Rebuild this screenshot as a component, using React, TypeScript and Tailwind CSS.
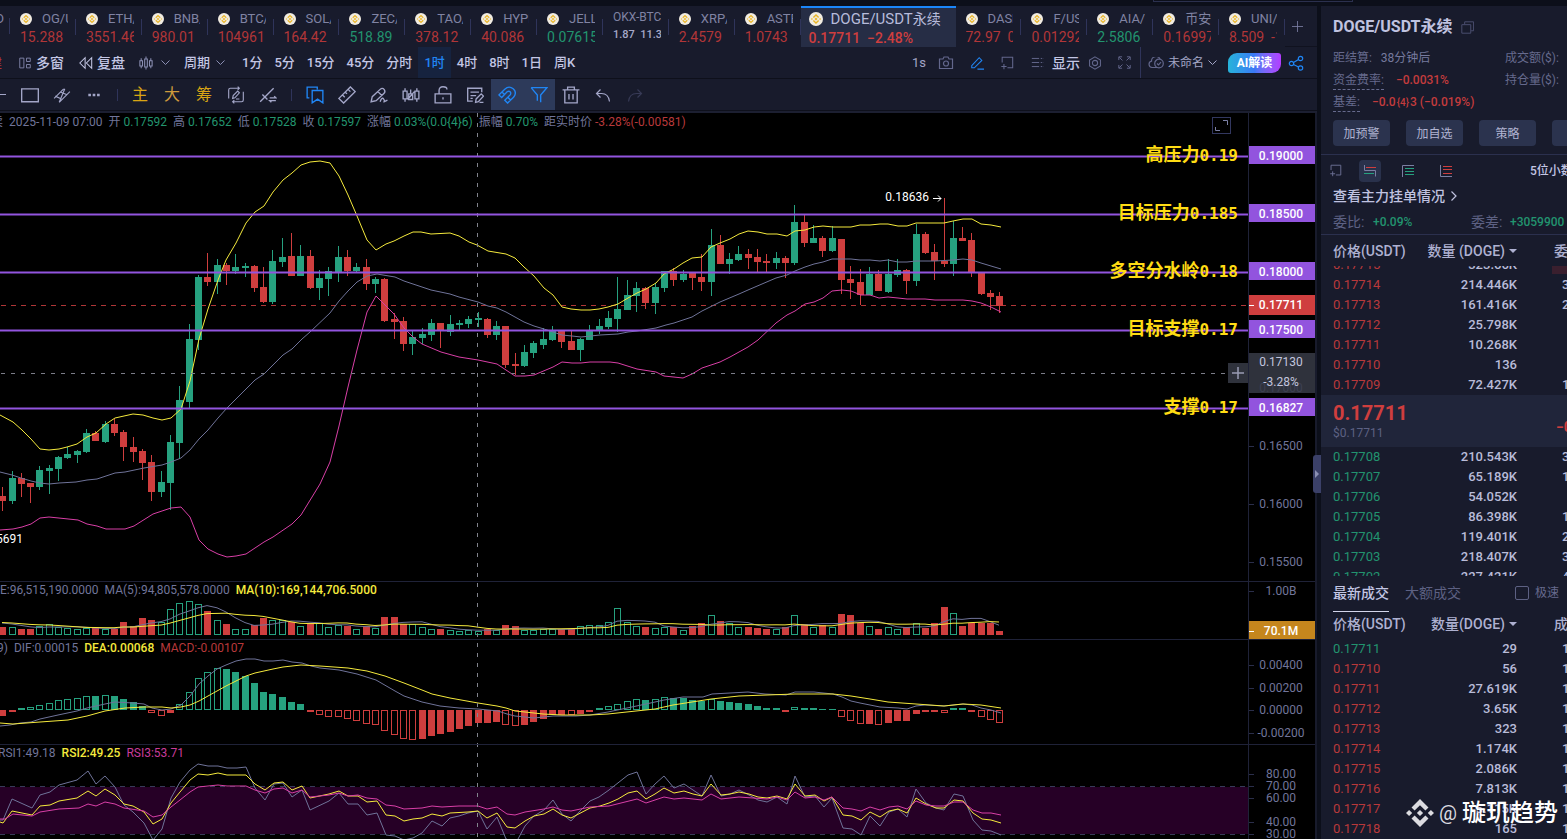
import { FC, ReactNode } from "react";
import clsx from "clsx";

const UP = "#26a17f";
const DOWN = "#cf3e3e";
const YELLOW = "#f5ea3d";
const SLATE = "#6f7399";
const PINK = "#d83fa6";
const PURPLE = "#9254de";

/* ---------- Data ---------- */

interface Tab {
  name: string;
  price: string;
  up?: boolean;
  plain?: boolean;
}

const leftTabs: Tab[] = [
  { name: "OG/USDT", price: "15.288" },
  { name: "ETH/USDT", price: "3551.46" },
  { name: "BNB/USDT", price: "980.01" },
  { name: "BTC/USDT", price: "104961" },
  { name: "SOL/USDT", price: "164.42" },
  { name: "ZEC/USDT", price: "518.89", up: true },
  { name: "TAO/USDT", price: "378.12" },
  { name: "HYPE/USDT", price: "40.086" },
  { name: "JELLY/USDT", price: "0.07615", up: true },
  { name: "OKX-BTC", price: "1.87  11.36", plain: true },
  { name: "XRP/USDT", price: "2.4579" },
  { name: "ASTER/USDT", price: "1.0743" },
];

const rightTabs: Tab[] = [
  { name: "DASH/USDT", price: "72.97  0.12" },
  { name: "F/USDT", price: "0.01292" },
  { name: "AIA/USDT", price: "2.5806", up: true },
  { name: "币安人生", price: "0.16997" },
  { name: "UNI/USDT", price: "8.509  -1.2" },
];

const periods = ["1分", "5分", "15分", "45分", "分时", "1时", "4时", "8时", "1日", "周K"];

// [up, body top, body bottom, high, low]
const candles: [number, number, number, number, number][] = [
  [0, 496, 501, 487, 511], [1, 478, 501, 471, 504], [0, 478, 484, 473, 497], [0, 483, 487, 483, 503],
  [1, 470, 487, 466, 490], [1, 468, 471, 465, 494], [1, 457, 469, 456, 481], [1, 454, 458, 447, 459],
  [1, 451, 455, 450, 463], [1, 433, 452, 429, 453], [0, 433, 441, 431, 441], [1, 424, 442, 421, 443],
  [0, 424, 433, 419, 436], [0, 432, 447, 430, 461], [0, 447, 452, 437, 462], [0, 451, 463, 449, 480],
  [0, 462, 492, 455, 501], [1, 482, 492, 471, 497], [1, 442, 483, 435, 510], [1, 400, 443, 386, 459],
  [1, 339, 402, 324, 408], [1, 277, 340, 275, 350], [0, 277, 282, 253, 286], [1, 265, 282, 259, 294],
  [0, 265, 271, 263, 285], [1, 267, 271, 254, 274], [1, 266, 268, 263, 277], [0, 266, 288, 265, 292],
  [0, 287, 302, 267, 303], [1, 261, 302, 250, 304], [1, 257, 262, 238, 267], [0, 256, 276, 233, 276],
  [1, 256, 276, 245, 276], [0, 256, 288, 250, 289], [1, 278, 288, 270, 300], [1, 271, 279, 267, 296],
  [1, 257, 272, 246, 282], [0, 257, 271, 250, 276], [1, 267, 271, 263, 273], [0, 267, 284, 259, 290],
  [1, 279, 284, 277, 293], [0, 279, 321, 278, 322], [0, 319, 322, 313, 339], [0, 321, 344, 317, 351],
  [1, 337, 344, 331, 355], [1, 334, 338, 328, 344], [1, 323, 335, 319, 341], [0, 323, 331, 323, 348],
  [1, 324, 332, 315, 336], [1, 323, 325, 320, 330], [1, 319, 324, 316, 328], [1, 318, 320, 312, 327],
  [0, 319, 335, 318, 338], [1, 326, 335, 321, 340], [0, 326, 365, 326, 368], [0, 364, 366, 353, 375],
  [1, 352, 366, 345, 367], [1, 343, 353, 341, 358], [1, 339, 345, 328, 349], [1, 330, 340, 326, 341],
  [0, 330, 342, 330, 348], [0, 341, 350, 331, 350], [1, 339, 350, 338, 361], [1, 330, 340, 325, 340],
  [1, 326, 331, 319, 334], [1, 318, 327, 311, 329], [1, 309, 319, 277, 332], [1, 295, 310, 280, 310],
  [1, 288, 296, 282, 312], [0, 288, 303, 287, 309], [1, 287, 303, 283, 314], [1, 271, 288, 271, 292],
  [0, 271, 280, 268, 286], [1, 274, 280, 270, 282], [0, 273, 278, 273, 290], [0, 277, 282, 254, 291],
  [1, 245, 282, 229, 296], [0, 245, 264, 235, 264], [1, 259, 264, 253, 274], [1, 254, 260, 246, 261],
  [0, 254, 258, 249, 269], [0, 257, 262, 249, 272], [0, 261, 263, 254, 272], [1, 258, 263, 252, 269],
  [0, 258, 263, 256, 278], [1, 222, 263, 205, 265], [0, 222, 243, 215, 247], [1, 238, 243, 225, 243],
  [0, 238, 251, 236, 257], [1, 238, 251, 226, 252], [0, 239, 280, 239, 294], [0, 279, 283, 266, 299],
  [0, 282, 295, 269, 305], [1, 274, 295, 267, 295], [0, 274, 291, 270, 291], [1, 274, 292, 259, 293],
  [1, 270, 275, 259, 277], [0, 270, 281, 269, 294], [1, 234, 281, 224, 286], [0, 234, 253, 232, 254],
  [0, 252, 261, 244, 280], [0, 261, 264, 198, 267], [1, 238, 264, 221, 276], [0, 238, 241, 227, 241],
  [0, 240, 272, 233, 277], [0, 273, 294, 273, 295], [0, 293, 297, 290, 310], [0, 296, 306, 292, 313],
];

const volumes = [
  8, 8, 6, 6, 9, 11, 8, 7, 6, 7, 7, 6, 6, 13, 9, 17, 15, 13, 26, 32, 34, 31, 24, 15, 11, 6, 6, 10,
  17, 15, 15, 13, 9, 12, 12, 8, 10, 9, 6, 9, 7, 18, 18, 11, 11, 8, 6, 6, 5, 4, 5, 4, 6, 5, 10, 9,
  5, 5, 6, 6, 6, 6, 9, 10, 10, 13, 27, 13, 9, 8, 7, 8, 8, 5, 9, 12, 20, 14, 12, 8, 8, 7, 6, 6,
  8, 20, 11, 8, 10, 8, 21, 20, 12, 9, 6, 8, 6, 8, 12, 7, 12, 28, 22, 9, 12, 12, 12, 4,
];

const macd = [
  -6, -2, 2, 3, 5, 7, 10, 11, 12, 14, 14, 15, 14, 11, 8, 4, -3, -6, -3, 6, 18, 32, 38, 42, 41, 38,
  34, 27, 18, 16, 13, 8, 6, -2, -5, -7, -7, -9, -11, -14, -15, -21, -25, -29, -30, -29, -26, -24,
  -22, -19, -16, -13, -13, -12, -15, -16, -15, -12, -9, -5, -5, -5, -4, -2, 2, 4, 6, 9, 11, 10, 11,
  13, 12, 12, 10, 9, 11, 9, 8, 7, 6, 4, 2, 2, -2, 3, 2, 2, 1, 1, -7, -11, -14, -14, -15, -13, -11,
  -11, -4, -2, -2, -3, 2, 2, -2, -7, -10, -13,
];

// Bars drawn as outlines
const hollow = new Set([
  3, 4, 5, 6, 7, 8, 9, 11, 16, 17, 19, 20, 21, 22, 23, 34, 35, 36, 37, 38, 39, 40, 41, 42, 43, 44,
  54, 55, 61, 65, 66, 67, 68, 70, 71, 76, 85, 90, 91, 92, 94, 101, 105, 106, 107,
]);

const bollUpper =
  "0,415 13,422 22,430 31,439 40,449 49,450 59,449 67,447 77,444 87,437 96,433 106,424 115,418 133,414 143,415 153,418 162,420 171,418 181,409 190,381 199,339 208,309 218,280 226,260 236,243 246,223 255,212 264,206 273,192 283,180 292,173 301,165 310,162 320,161 330,163 339,176 348,195 357,216 367,240 376,250 386,244 394,241 404,236 413,232 421,232 431,234 450,233 459,236 469,242 477,245 488,251 506,254 515,258 524,267 534,276 544,288 553,295 562,307 571,309 581,310 590,310 599,309 608,307 618,304 628,298 637,293 646,289 656,283 664,274 674,269 683,263 692,258 702,257 711,247 720,243 730,239 739,234 748,231 758,232 767,234 777,234 787,236 795,231 805,230 814,227 823,226 833,227 851,227 860,225 870,225 880,224 888,224 898,226 907,226 916,223 944,223 953,221 963,219 972,219 981,224 991,225 1001,227";
const bollMid =
  "0,472 12,475 21,478 31,481 40,483 49,484 59,483 76,482 87,480 97,479 106,476 115,473 125,472 144,468 162,465 171,462 181,458 190,450 199,439 208,430 218,418 227,408 255,380 264,374 283,355 292,349 302,339 310,332 330,313 339,301 348,291 357,282 367,276 377,274 395,277 404,281 431,290 450,294 459,297 478,302 488,306 497,308 506,312 524,322 534,326 544,329 562,335 572,336 581,337 600,335 618,334 628,332 637,331 656,328 666,325 674,323 692,317 702,311 720,302 739,294 748,290 776,278 787,275 795,271 805,267 814,264 823,262 832,259 851,259 860,260 870,260 880,261 888,260 898,262 907,262 916,261 935,261 953,260 963,259 972,260 981,263 991,266 1001,269";
const bollLower =
  "0,530 13,529 22,527 31,524 40,518 49,517 78,520 87,524 97,526 106,529 125,529 134,526 153,514 171,508 181,507 190,517 199,540 208,549 218,554 227,557 236,556 246,554 264,542 273,537 292,524 301,515 320,484 330,462 339,426 348,387 357,350 367,312 376,296 385,305 394,314 404,328 413,337 422,344 441,352 459,357 478,360 497,364 515,376 525,376 534,375 553,367 562,362 572,363 581,363 590,362 610,362 618,363 637,369 656,372 664,376 683,378 692,374 702,368 720,362 730,357 739,352 748,347 758,340 776,323 787,315 795,311 805,304 814,302 823,298 832,291 842,290 851,291 861,295 870,295 879,298 888,297 898,298 907,299 925,299 935,300 963,300 972,301 981,303 991,307 1001,312";
const difLine =
  "0,726 10,725 20,723 31,722 40,719 58,715 77,711 87,708 105,704 115,702 133,703 144,704 152,708 162,710 171,709 181,705 190,696 199,684 208,676 217,669 226,665 236,661 246,659 255,659 264,661 273,661 283,660 292,662 302,663 311,666 320,668 339,670 357,674 376,680 395,691 404,696 422,702 440,706 459,708 478,709 498,711 507,714 515,716 525,717 534,718 553,716 576,716 590,715 608,712 627,708 646,704 664,700 683,697 703,697 712,694 730,693 748,692 765,694 786,695 795,692 814,692 833,694 842,697 851,701 860,703 880,707 898,708 907,709 916,706 925,705 944,706 953,705 963,704 972,705 981,708 991,710 1001,713";
const deaLine =
  "0,723 13,724 40,722 68,720 87,716 105,711 125,708 144,707 162,707 171,708 181,707 190,705 199,701 217,691 226,686 246,676 255,673 273,669 283,667 301,665 320,666 348,668 367,671 385,676 404,683 422,690 432,694 450,698 478,703 497,706 506,708 515,711 525,712 543,714 562,715 590,715 608,714 636,711 655,709 673,705 692,702 711,699 739,696 767,695 795,694 833,694 851,696 870,699 888,702 916,704 944,706 963,704 981,705 1001,708";
const rsi1 =
  "0,820 3,820 12,799 32,808 40,795 50,792 59,785 77,780 88,771 96,784 105,776 115,787 124,805 133,812 144,823 153,840 162,829 171,798 180,782 190,770 198,764 208,766 218,766 227,768 237,768 246,767 255,788 265,800 274,784 283,783 292,797 302,790 310,810 329,801 339,793 348,804 358,804 367,815 377,813 386,835 395,836 404,840 413,838 422,833 432,821 442,826 450,818 459,816 468,813 478,811 487,829 497,817 506,839 515,842 518,839 525,826 534,816 544,810 553,800 562,814 571,821 580,811 590,801 599,797 609,790 628,775 637,772 646,794 655,784 664,776 674,788 684,784 693,790 702,796 711,775 721,796 730,794 739,790 749,795 758,800 767,802 777,797 787,804 795,776 805,797 815,796 824,807 832,798 843,828 852,829 861,835 870,816 880,826 889,812 898,809 907,817 916,789 926,803 936,808 944,810 954,794 963,796 973,820 982,830 991,831 1001,835";
const rsi2 =
  "0,822 3,823 12,811 32,815 40,806 50,805 59,801 77,798 88,791 96,796 105,789 115,795 124,804 133,806 144,812 153,824 162,819 171,803 180,792 190,780 198,774 208,775 218,773 227,775 246,775 255,784 265,790 274,783 283,782 292,790 302,786 310,798 329,794 339,791 348,796 358,796 367,802 377,801 386,815 395,816 404,821 413,819 422,818 432,814 442,816 450,813 468,812 478,811 487,818 497,813 507,827 515,828 525,821 534,816 544,814 553,809 562,815 571,818 590,808 600,806 609,803 618,799 628,793 637,791 646,799 655,794 664,788 674,793 684,791 693,794 702,796 711,784 721,795 730,794 739,792 749,794 758,797 767,798 777,796 787,799 795,784 805,796 815,795 824,801 832,797 843,815 852,816 861,820 870,812 880,817 889,811 898,809 907,813 916,798 926,804 936,808 944,808 954,800 963,801 973,813 982,819 991,820 1001,823";
const rsi3 =
  "0,819 5,819 13,814 32,816 40,812 59,809 79,808 88,804 96,806 105,802 115,804 124,808 144,811 153,817 162,815 171,807 180,800 190,792 198,787 218,785 227,786 246,786 255,790 265,793 274,789 283,788 292,793 302,790 310,797 329,795 339,793 348,796 358,795 367,798 377,799 386,805 395,806 404,809 422,808 432,806 442,807 459,806 478,806 487,809 497,807 507,814 515,815 525,812 544,809 553,807 562,810 571,811 590,807 609,806 637,799 646,803 655,800 664,797 674,799 684,798 702,800 711,794 721,799 739,797 767,799 777,797 787,800 795,792 805,798 815,797 824,800 832,797 843,808 852,809 861,811 870,807 880,810 889,807 898,806 907,809 916,801 926,805 936,806 944,806 954,802 963,802 973,810 982,813 991,813 1001,815";

const levels = [
  { y: 156, name: "高压力", value: "0.19", tag: "0.19000" },
  { y: 214, name: "目标压力", value: "0.185", tag: "0.18500" },
  { y: 272, name: "多空分水岭", value: "0.18", tag: "0.18000" },
  { y: 330, name: "目标支撑", value: "0.17", tag: "0.17500" },
  { y: 408, name: "支撑", value: "0.17", tag: "0.16827" },
];

type Row = [string, string, string];

const asks: Row[] = [
  ["0.17715", "323.66K", "5"],
  ["0.17714", "214.446K", "38"],
  ["0.17713", "161.416K", "28"],
  ["0.17712", "25.798K", ""],
  ["0.17711", "10.268K", ""],
  ["0.17710", "136", ""],
  ["0.17709", "72.427K", "12"],
];

const bids: Row[] = [
  ["0.17708", "210.543K", "37"],
  ["0.17707", "65.189K", "11"],
  ["0.17706", "54.052K", ""],
  ["0.17705", "86.398K", "15"],
  ["0.17704", "119.401K", "21"],
  ["0.17703", "218.407K", "38"],
  ["0.17702", "227.421K", "40"],
];

const trades: Row[] = [
  ["0.17711", "29", "10"],
  ["0.17710", "56", "10"],
  ["0.17711", "27.619K", "10"],
  ["0.17712", "3.65K", "10"],
  ["0.17713", "323", "10"],
  ["0.17714", "1.174K", "10"],
  ["0.17715", "2.086K", "10"],
  ["0.17716", "7.813K", "10"],
  ["0.17717", "5.115K", "10"],
  ["0.17718", "165", "10"],
];

/* ---------- Icons ---------- */

interface IconProps {
  size?: number;
  className?: string;
  children: ReactNode;
}

const Icon: FC<IconProps> = ({ size = 16, className, children }) => (
  <svg
    width={size}
    height={size}
    viewBox="0 0 16 16"
    fill="none"
    stroke="currentColor"
    strokeWidth="1.2"
    className={clsx("shrink-0", className)}
    aria-hidden
  >
    {children}
  </svg>
);

const CoinIcon: FC<{ className: string }> = ({ className }) => (
  <svg viewBox="0 0 24 24" className={clsx("shrink-0", className)} aria-hidden>
    <circle cx="12" cy="12" r="12" fill="#f1ece2" />
    <g fill="none" stroke="#e9b527" strokeWidth="2.4">
      <path d="M7.5 9.5 12 5l4.500 4.500" />
      <path d="M7.500 14.500 12 19l4.500-4.500" />
    </g>
    <path d="m12 9.500 2.500 2.500-2.500 2.500L9.500 12zM5 10.300 6.700 12 5 13.700 3.300 12zM19 10.300l1.700 1.700-1.700 1.700-1.700-1.700z" fill="#e9b527" />
  </svg>
);

const Chevron: FC = () => (
  <svg width="9" height="6" viewBox="0 0 9 6" fill="none" stroke="currentColor" className="shrink-0" aria-hidden>
    <path d="M.5.500 4.500 4.500 8.500.500" />
  </svg>
);

const Caret: FC = () => (
  <svg width="8" height="4" viewBox="0 0 8 4" fill="currentColor" className="shrink-0" aria-hidden>
    <path d="M0 0h8L4 4z" />
  </svg>
);

const CandlesIcon: FC<{ size?: number }> = ({ size }) => (
  <Icon size={size}>
    <path d="M1 5.500h3v6H1zM6.500 3.500h3v9h-3zM12 5.500h3v6h-3zM2.500 2.500v3M2.500 11.500v2.500M8 .500v3M8 12.500v3M13.500 2.500v3M13.500 11.500v2.500" />
  </Icon>
);

const AddPaneIcon: FC<{ size?: number }> = ({ size }) => (
  <Icon size={size}>
    <path d="M2.500 7.500V1.500h12v12H8.500M4.500 9v6M1.500 12h6" />
  </Icon>
);

/* ---------- Top tabs ---------- */

const TabItem: FC<{ tab: Tab }> = ({ tab }) => (
  <button className="flex min-w-0 flex-1 basis-0 items-center text-left">
    <span
      className={clsx(
        "ml-[10px] flex h-full min-w-0 flex-1 flex-col overflow-hidden whitespace-pre",
        tab.plain ? "pt-[2px]" : "pt-1"
      )}
    >
      <span className="flex items-center gap-[10px]">
        {!tab.plain && <CoinIcon className="h-3 w-3" />}
        <span
          className={clsx(
            "leading-[18px] text-[#8083a3]",
            tab.plain ? "text-xs" : "text-[13px]"
          )}
        >
          {tab.name}
        </span>
      </span>
      <span
        className={clsx(
          "leading-[18px]",
          tab.plain ? "text-[11px] font-medium text-[#a6a9c9]" : "text-sm leading-[18px]",
          !tab.plain && (tab.up ? "text-[#22946f]" : "text-[#b13638]")
        )}
      >
        {tab.price}
      </span>
    </span>
    <span className="ml-[7px] h-4 w-px bg-[#2f345a]" />
  </button>
);

const TabBar: FC = () => (
  <nav className="flex h-[41px] bg-[#181b2c]">
    <div className="flex w-[10px] shrink-0 items-start justify-end overflow-hidden">
      <span className="mr-[5px] pt-1 text-[13px] leading-[18px] text-[#8083a3]">D</span>
      <span className="mt-3 h-4 w-px shrink-0 bg-[#2f345a]" />
    </div>
    {leftTabs.map((tab) => (
      <TabItem key={tab.name} tab={tab} />
    ))}
    <button className="w-[155px] shrink-0 border-t-2 border-[#1b86f9] bg-[#262d45] pl-2 text-left">
      <span className="flex items-center gap-2 pt-[2px] text-[15px] leading-[18px] whitespace-nowrap text-[#b7bbdb]">
        <CoinIcon className="h-[14px] w-[14px]" />
        <span>
          DOGE/USDT<span className="text-sm leading-[18px]">永续</span>
        </span>
      </span>
      <span className="block text-sm leading-5 font-medium text-[#cf3e3e]">0.17711&nbsp; −2.48%</span>
    </button>
    {rightTabs.map((tab) => (
      <TabItem key={tab.name} tab={tab} />
    ))}
    <button aria-label="添加" className="flex w-8 shrink-0 items-center justify-center border-b border-[#10121f] pr-[6px] text-[#7c80a5]">
      <Icon size={11}>
        <path d="M8 0v16M0 8h16" />
      </Icon>
    </button>
  </nav>
);

/* ---------- Period toolbar ---------- */

const PeriodBar: FC = () => (
  <div className="flex h-8 items-center justify-between border-b border-[#0e101b] bg-[#181b2c] text-sm leading-5 whitespace-nowrap text-[#c3c6e4]">
    <div className="flex h-full items-center">
      <button className="flex w-[19px] items-center overflow-hidden text-[#b13638]">
        <span className="-ml-[11px] text-[13px]">建</span>
      </button>
      <button className="flex items-center gap-[5px] font-medium">
        <Icon size={12} className="text-[#8589ae]">
          <path d="M1 1.500h5.500v13H1zM10 1.500h5v4.500h-5zM10 10h5v4.500h-5z" />
        </Icon>
        多窗
      </button>
      <button className="ml-[15px] flex items-center gap-1 font-medium">
        <Icon size={14}>
          <path d="M7 2v12L1 8zM14.500 2v12L8.500 8z" />
        </Icon>
        复盘
      </button>
      <button aria-label="K线样式" className="ml-[14px] flex items-center gap-2 text-[#8b8fb3]">
        <CandlesIcon size={14} />
        <Chevron />
      </button>
      <button className="ml-[14px] flex items-center gap-[6px] text-[13px] font-medium">
        周期
        <span className="text-[#8b8fb3]">
          <Chevron />
        </span>
      </button>
      <div className="ml-[11px] flex h-full">
        {periods.map((p) => (
          <button
            key={p}
            className={clsx(
              "px-[6px] text-[13px] font-medium",
              p === "1时" && "bg-[#16233f] text-[#2086f5]"
            )}
          >
            {p}
          </button>
        ))}
      </div>
    </div>

    <div className="flex h-full items-center pr-[13px] text-[#63678c]">
      <button className="text-[13px] text-[#a3a6c6]">1s</button>
      <button aria-label="截图" className="ml-3">
        <Icon>
          <path d="M1.500 4h3.500l1-2h4l1 2h3.500v9.500h-13z" />
          <circle cx="8" cy="8.500" r="2.500" />
        </Icon>
      </button>
      <button aria-label="画图" className="ml-4 text-[#2086f5]">
        <Icon size={14}>
          <path d="M2 11 10.500 2 13.500 5 5 13.500H2zM8.500 15H16" />
        </Icon>
      </button>
      <button aria-label="添加窗口" className="ml-4">
        <AddPaneIcon size={14} />
      </button>
      <button aria-label="列表" className="ml-[17px]">
        <Icon size={13}>
          <path d="M1 3h9M1 8h9M1 13h9" />
          <path d="M12 3h3M12 8h3M12 13h3" strokeDasharray="1.500 1" />
        </Icon>
      </button>
      <button className="ml-2 font-medium text-[#c3c6e4]">显示</button>
      <button aria-label="设置" className="ml-2">
        <Icon size={14}>
          <path d="M8 1l6.200 3.500v7L8 15l-6.200-3.500v-7z" />
          <circle cx="8" cy="8" r="3" />
        </Icon>
      </button>
      <button aria-label="全屏" className="ml-4">
        <Icon size={13}>
          <path d="M1 5V1h4M11 1h4v4M15 11v4h-4M5 15H1v-4M1.500 1.500l4 4M14.500 1.500l-4 4M14.500 14.500l-4-4M1.500 14.500l4-4" />
        </Icon>
      </button>
      <span className="ml-[9px] h-full w-px bg-[#2f345a]" />
      <button className="ml-[7px] flex items-center gap-1 text-xs text-[#a3a6c6]">
        <svg width="16" height="12" viewBox="0 0 16 12" fill="none" stroke="#63678c" strokeWidth="1.200" aria-hidden>
          <path d="M9 10.500H4a3.200 3.200 0 0 1-.5-6.300A4.500 4.500 0 0 1 12 2" />
          <circle cx="11" cy="6.500" r="4.300" />
          <path d="m9 6.500 1.500 1.500 2.500-2.800" />
        </svg>
        <span>未命名</span>
        <Chevron />
      </button>
      <button className="ml-[11px] h-5 w-[53px] rounded-[3px] rounded-tl-[9px] rounded-br-[9px] bg-linear-to-r from-[#27b3d9] via-[#3b78f5] to-[#b43bff] text-xs font-bold text-white">
        AI解读
      </button>
      <button aria-label="分享" className="ml-[7px] text-[#2086f5]">
        <Icon>
          <circle cx="3.500" cy="8.500" r="2.200" />
          <circle cx="12.500" cy="3.500" r="2.200" />
          <circle cx="12.500" cy="13" r="2.200" />
          <path d="m5.500 7.500 5-3M5.500 9.500l5 2.500" />
        </Icon>
      </button>
    </div>
  </div>
);

/* ---------- Drawing toolbar ---------- */

interface ToolProps {
  label: string;
  tone?: string;
  children: ReactNode;
}

const Tool: FC<ToolProps> = ({ label, tone = "text-[#a3a6c8]", children }) => (
  <button aria-label={label} className={clsx("flex w-8 shrink-0 items-center justify-center", tone)}>
    {children}
  </button>
);

const ToolDivider: FC = () => (
  <span className="flex w-[14px] shrink-0 items-center justify-center">
    <span className="h-3 w-px bg-[#2f345a]" />
  </span>
);

const DrawBar: FC = () => (
  <div className="flex h-8 border-b border-[#0e101b] bg-[#181b2c]">
    <button aria-label="水平线" className="flex w-[14px] shrink-0 items-center">
      <span className="h-px w-[6px] bg-[#a3a6c8]" />
    </button>
    <Tool label="矩形">
      <Icon size={18}>
        <path d="M.600 2.500h14.800v11.500H.600z" />
      </Icon>
    </Tool>
    <Tool label="平行线">
      <Icon size={18}>
        <path d="M1 11 9.500 2.500M5.500 14.500 15 5M2 9l5.500 2.500M7 5.500l5 2M10.500 2.500l-5 12" strokeWidth="1" />
      </Icon>
    </Tool>
    <Tool label="更多">
      <Icon size={14}>
        <path d="M1.500 8h3M6.500 8h3M11.500 8h3" strokeWidth="3" />
      </Icon>
    </Tool>
    <ToolDivider />
    <Tool label="主图指标" tone="text-base text-[#d9a514]">主</Tool>
    <Tool label="大单" tone="text-base text-[#cf9a3c]">大</Tool>
    <Tool label="筹码" tone="text-base text-[#d9a514]">筹</Tool>
    <Tool label="编辑指标">
      <Icon size={18}>
        <path d="M1.500 11V3.500q0-1.500 1.500-1.500h8M9.500.500l1.500 1.500-1.500 1.500M14.500 5v7.500q0 1.500-1.500 1.500H5M6.500 12.500 5 14l1.500 1.500M5 11l.5-2.500L9.500 4.500 11 6l-4 4.500zM8 11.500h3" strokeWidth="1" />
      </Icon>
    </Tool>
    <Tool label="画线管理">
      <Icon size={18}>
        <path d="M1 14 13 2M3 7.500 7.500 12M9.500 10.500h5.500l-1.500-1.500M15 13H9.500l1.500 1.500" />
      </Icon>
    </Tool>
    <ToolDivider />
    <span className="w-px shrink-0" />
    <Tool label="收藏" tone="text-[#2086f5]">
      <Icon size={18}>
        <path d="M5.500 4h9.500v11l-4.700-3.300L5.500 15zM3 10.500H1V1h9v2" />
      </Icon>
    </Tool>
    <Tool label="测量">
      <Icon size={18}>
        <path d="M.8 11 11 .8l4.200 4.200L5 15.200zM4 8l2 2M6.500 5.500l1.500 1.500M9 3l2 2" />
      </Icon>
    </Tool>
    <Tool label="画笔">
      <Icon size={18}>
        <path d="M1 14l1-4.500L9 3q2-1.800 3.500 0t0 3.500L5.500 13zM7 5l3.500 3.500M9 14q1.500-4.500 3-2.500t.5 2.500T15.500 12.500" />
      </Icon>
    </Tool>
    <Tool label="K线复制">
      <Icon size={18}>
        <path d="M1 4.500h3.500v7H1zM11.500 4.500H15v7h-3.500zM6 7h3.500v5H6zM2.700 2v2.500M2.700 11.500V14M7.700 3v4M13.200 2v2.500M13.200 11.500V14M5 12l6-7" />
      </Icon>
    </Tool>
    <Tool label="锁定">
      <Icon size={18}>
        <path d="M1 7h14v8H1zM4.500 7V4q0-3.300 3.500-3.300T11.500 3M8 10v2" />
      </Icon>
    </Tool>
    <Tool label="备注">
      <Icon size={18}>
        <path d="M14 5.500V2H1.500v11.500H6M4 5.500h7.500M4 8.500h5M4 11h2M8.500 14.500l.5-3L13.500 7l2 2-4.500 5zM12 14.500h3.500" />
      </Icon>
    </Tool>
    <Tool label="磁吸" tone="bg-[#2d3a5a] text-[#2086f5]">
      <Icon size={18}>
        <path d="M.8 8 6 2.800q3.800-3.500 7.500-.3t.3 7.500L8.500 15.200 6 12.700l5-5q.8-1.500-.2-2.500t-2.500-.2l-5 5.200zM3.500 5.300 6 7.800M11.200 12.500 8.700 10" />
      </Icon>
    </Tool>
    <Tool label="筛选" tone="bg-[#2d3a5a] text-[#2086f5]">
      <Icon size={18}>
        <path d="M1 1.500h14L9.500 8v6.500M1 1.500 6.500 8v5" />
      </Icon>
    </Tool>
    <Tool label="删除">
      <Icon size={18}>
        <path d="M.5 3.500h15M5 3.500V1h6v2.500M2.500 3.500V15h11V3.500M6.200 7v5M9.800 7v5" />
      </Icon>
    </Tool>
    <Tool label="撤销">
      <Icon size={16}>
        <path d="M5.500 2.500 1.500 6.500l4 4M1.500 6.500h5q7 0 8 8" />
      </Icon>
    </Tool>
    <Tool label="重做" tone="text-[#373a56]">
      <Icon size={16}>
        <path d="m10.500 2.500 4 4-4 4M14.500 6.500h-5q-7 0-8 8" />
      </Icon>
    </Tool>
  </div>
);

/* ---------- Chart ---------- */

const barX = (i: number) => Math.floor(2.7 + 9.32 * i);

// Rolling mean of the volume bars as svg points, padded on the left
const volumeAverage = (n: number) => {
  const padded = [...Array(10).fill(13), ...volumes];
  return volumes
    .map((_, i) => {
      const part = padded.slice(i + 11 - n, i + 11);
      const mean = part.reduce((a, b) => a + b, 0) / n;
      return `${barX(i)},${(635 - mean).toFixed(1)}`;
    })
    .join(" ");
};

const Line: FC<{ points: string; color: string }> = ({ points, color }) => (
  <polyline points={points} fill="none" stroke={color} strokeWidth="1" />
);

const Crosshair: FC = () => (
  <line x1="477.5" x2="477.5" y1="113" y2="840" stroke="#82848d" strokeDasharray="4 6" />
);

const Tick: FC<{ y: number; children: string }> = ({ y, children }) => (
  <>
    <line x1="0" x2="6" y1={y + 0.5} y2={y + 0.5} stroke="#2a2e4a" />
    <text x="33" y={y + 4} fill="#71759a" textAnchor="middle">
      {children}
    </text>
  </>
);

interface PaneProps {
  top: number;
  className: string;
  plot: ReactNode;
  axis: ReactNode;
  legend: ReactNode;
}

// One stacked pane: drawing on the left, value axis on the right
const Pane: FC<PaneProps> = ({ top, className, plot, axis, legend }) => (
  <section className={clsx("relative flex overflow-hidden bg-black text-xs", className)}>
    <svg className="h-full min-w-0 flex-1">
      <g transform={`translate(0 ${-top})`}>{plot}</g>
    </svg>
    <svg className="h-full w-[67px] shrink-0 border-l border-[#1f2238]">
      <g transform={`translate(-1 ${-top})`}>{axis}</g>
    </svg>
    <div className="absolute top-0 left-0 flex gap-[6px] leading-4 whitespace-nowrap text-[#71759a]">
      {legend}
    </div>
  </section>
);

const Quote: FC<{ label: string; value: string; down?: boolean }> = ({ label, value, down }) => (
  <span className="leading-[18px]">
    {label} <span className={down ? "text-[#b8393b]" : "text-[#23956f]"}>{value}</span>
  </span>
);

const PricePlot: FC = () => (
  <>
    <line x1="1" x2="100%" y1="305.5" y2="305.5" stroke="#b03637" strokeDasharray="5 5" />
    {candles.map(([up, top, bottom, high, low], i) => (
      <g key={i} fill={up ? UP : DOWN}>
        <rect x={barX(i)} y={high} width="1" height={low - high} />
        <rect x={barX(i) - 3} y={top} width="7" height={bottom - top} />
      </g>
    ))}
    <Line points={bollMid} color={SLATE} />
    <Line points={bollUpper} color={YELLOW} />
    <Line points={bollLower} color={PINK} />
    <Crosshair />
    <line x1="1" x2="100%" y1="373.5" y2="373.5" stroke="#7b7d88" strokeDasharray="4 6" />
    {levels.map((l) => (
      <line key={l.y} x1="0" x2="100%" y1={l.y + 0.5} y2={l.y + 0.5} stroke={PURPLE} strokeWidth="2" />
    ))}
    <text x="23" y="543" fill="#fff" textAnchor="end">
      0.15691
    </text>
    <text x="929" y="201" fill="#fff" textAnchor="end">
      0.18636
    </text>
    <path d="M933 198.500h8M938 195.500l3 3-3 3" fill="none" stroke="#fff" />
  </>
);

const Chart: FC = () => (
  <div className="flex min-h-0 flex-1 flex-col border-t-2 border-[#1c1f31] pr-[2px]">
    <div className="relative">
      <Pane
        top={113}
        className="h-[468px]"
        plot={<PricePlot />}
        axis={
          <>
            <Tick y={446}>0.16500</Tick>
            <Tick y={504}>0.16000</Tick>
            <Tick y={562}>0.15500</Tick>
            {levels.map((l) => (
              <g key={l.y}>
                <rect x="0" y={l.y - 10} width="68" height="18" fill={PURPLE} />
                <text x="33" y={l.y + 4} fill="#fff" fontWeight="500" textAnchor="middle">
                  {l.tag}
                </text>
              </g>
            ))}
            <rect x="0" y="295" width="68" height="20" fill={DOWN} />
            <line x1="0" x2="6" y1="305.5" y2="305.5" stroke="#fff" />
            <text x="33" y="309" fill="#fff" fontWeight="500" textAnchor="middle">
              0.17711
            </text>
            <rect x="1" y="353" width="67" height="40" fill="#2f323c" />
            <text x="33" y="392" fill="#3d4052" textAnchor="middle">
              0.17000
            </text>
            <text x="33" y="366" fill="#c3c5de" textAnchor="middle">
              0.17130
            </text>
            <text x="33" y="386" fill="#c3c5de" textAnchor="middle">
              -3.28%
            </text>
          </>
        }
        legend={
          <>
            <span className="-ml-[9px] leading-[18px]">卖</span>
            <span className="leading-[18px]">2025-11-09 07:00</span>
            <Quote label="开" value="0.17592" />
            <Quote label="高" value="0.17652" />
            <Quote label="低" value="0.17528" />
            <Quote label="收" value="0.17597" />
            <Quote label="涨幅" value="0.03%(0.0{4}6)" />
            <Quote label="振幅" value="0.70%" />
            <Quote label="距实时价" value="-3.28%(-0.00581)" down />
          </>
        }
      />
      {/* Level names, right against the axis */}
      <div className="pointer-events-none absolute inset-y-0 right-[77px] w-[140px] text-right text-lg leading-6 font-bold text-[#ffdc14]">
        {levels.map((l) => (
          <div key={l.y} className="absolute right-0 whitespace-nowrap" style={{ top: l.y - 113 - 13 }}>
            {l.name}
            <span className="font-['DejaVu_Sans_Mono',monospace] text-base leading-6">{l.value}</span>
          </div>
        ))}
      </div>
      <button aria-label="放大" className="absolute top-1 right-[84px] flex h-[17px] w-[19px] items-center justify-center border border-[#32375f] text-[#7c80a5]">
        <svg width="13" height="13" viewBox="0 0 13 13" fill="none" stroke="currentColor" aria-hidden>
          <path d="M8 1.500h4.500V6M.5 8v3.500H5" />
        </svg>
      </button>
      <button aria-label="添加预警线" className="absolute top-[250px] right-[67px] flex h-5 w-5 items-center justify-center bg-[#2f323c] text-[#9a9cb4]">
        <Icon size={12}>
          <path d="M8 0v16M0 8h16" strokeWidth="2" />
        </Icon>
      </button>
    </div>

    <Pane
      top={582}
      className="h-[58px] border-t border-[#1f2238]"
      plot={
        <>
          {volumes.map((v, i) =>
            candles[i][0] ? (
              <rect key={i} x={barX(i) - 2.5} y={635.5 - v} width="6" height={v - 1} fill="none" stroke={UP} />
            ) : (
              <rect key={i} x={barX(i) - 3} y={635 - v} width="7" height={v} fill={DOWN} />
            )
          )}
          <Line points={volumeAverage(5)} color={SLATE} />
          <Line points={volumeAverage(10)} color={YELLOW} />
          <Crosshair />
        </>
      }
      axis={
        <>
          <Tick y={591}>1.00B</Tick>
          <rect x="0" y="621" width="67" height="18" fill="#c5861d" />
          <line x1="0" x2="6" y1="631.5" y2="631.5" stroke="#fff" />
          <text x="33" y="635" fill="#fff" fontWeight="500" textAnchor="middle">
            70.1M
          </text>
        </>
      }
      legend={
        <>
          <span>E:96,515,190.0000</span>
          <span>MA(5):94,805,578.0000</span>
          <span className="font-medium text-[#f5ea3d]">MA(10):169,144,706.5000</span>
        </>
      }
    />

    <Pane
      top={640}
      className="h-[105px] border-t border-[#1f2238]"
      plot={
        <>
          {macd.map((v, i) => {
            const color = v > 0 ? UP : DOWN;
            const top = v > 0 ? 710 - v : 710;
            const height = Math.abs(v);
            return hollow.has(i) ? (
              <rect key={i} x={barX(i) - 2.5} y={top + 0.5} width="6" height={height - 1} fill="none" stroke={color} />
            ) : (
              <rect key={i} x={barX(i) - 3} y={top} width="7" height={height} fill={color} />
            );
          })}
          <Line points={difLine} color={SLATE} />
          <Line points={deaLine} color={YELLOW} />
          <Crosshair />
        </>
      }
      axis={
        <>
          <Tick y={665}>0.00400</Tick>
          <Tick y={688}>0.00200</Tick>
          <Tick y={710}>0.00000</Tick>
          <Tick y={733}>-0.00200</Tick>
        </>
      }
      legend={
        <>
          <span className="-ml-[3px]">9)</span>
          <span>DIF:0.00015</span>
          <span className="font-medium text-[#f5ea3d]">DEA:0.00068</span>
          <span className="text-[#b8393b]">MACD:-0.00107</span>
        </>
      }
    />

    <Pane
      top={745}
      className="min-h-[94px] flex-1 border-t border-[#1f2238]"
      plot={
        <>
          <rect x="0" y="787" width="100%" height="47" fill="#260026" />
          <line x1="0" x2="100%" y1="786.5" y2="786.5" stroke="#363a58" strokeDasharray="5 5" />
          <line x1="0" x2="100%" y1="834.5" y2="834.5" stroke="#363a58" strokeDasharray="5 5" />
          <Line points={rsi1} color={SLATE} />
          <Line points={rsi2} color={YELLOW} />
          <Line points={rsi3} color={PINK} />
          <Crosshair />
        </>
      }
      axis={
        <>
          <Tick y={774}>80.00</Tick>
          <Tick y={786}>70.00</Tick>
          <Tick y={798}>60.00</Tick>
          <Tick y={822}>40.00</Tick>
          <Tick y={834}>30.00</Tick>
        </>
      }
      legend={
        <>
          <span className="-ml-[2px]">RSI1:49.18</span>
          <span className="font-medium text-[#f5ea3d]">RSI2:49.25</span>
          <span className="text-[#c93c9b]">RSI3:53.71</span>
        </>
      }
    />
  </div>
);

/* ---------- Side panel ---------- */

const BookTable: FC<{ rows: Row[]; color: (i: number) => string; label: string }> = ({ rows, color, label }) => (
  <table aria-label={label} className="ml-3 w-[320px] table-fixed text-[13px]">
    <tbody>
      {rows.map(([price, amount, total], i) => (
        <tr key={i} className="h-5 leading-5">
          <td className={clsx("w-[88px] p-0", color(i))}>{price}</td>
          <td className="w-[96px] p-0 text-right font-medium text-[#b9bcd9]">{amount}</td>
          <td className="p-0 pl-[45px] font-medium text-[#b9bcd9]">{total}</td>
        </tr>
      ))}
    </tbody>
  </table>
);

const BookHeader: FC<{ amount: string; third: string }> = ({ amount, third }) => (
  <div className="ml-3 flex w-[320px] items-center text-sm leading-5 font-medium text-[#aeb1d1]">
    <span className="w-[80px]">价格(USDT)</span>
    <button className="flex w-[104px] items-center justify-end gap-1">
      {amount}
      <Caret />
    </button>
    <span className="ml-[37px]">{third}</span>
  </div>
);

const SidePanel: FC = () => (
  <aside className="relative flex w-[246px] shrink-0 flex-col overflow-hidden bg-[#181b2c] whitespace-nowrap">
    <div className="flex items-center gap-[9px] px-3 pt-[9px]">
      <h1 className="text-base leading-6 font-bold text-[#c0c3e0]">DOGE/USDT永续</h1>
      <button aria-label="复制" className="text-[#4b4f70]">
        <Icon size={13}>
          <path d="M4.500 4V1h11v11h-3M1 4.500h11v10.500H1z" />
        </Icon>
      </button>
    </div>
    <div className="grid w-[320px] grid-cols-[172px_1fr] pt-2 pl-3 text-xs leading-[22px] text-[#666a8d]">
      <span>
        距结算:&nbsp;&nbsp; <span className="text-[#767a9e]">38分钟后</span>
      </span>
      <span>成交额($):</span>
      <span className="flex gap-3">
        <span className="h-[21px] border-b border-dashed border-[#666a8d]">资金费率:</span>
        <span className="font-medium text-[#c43b3d]">−0.0031%</span>
      </span>
      <span>持仓量($):</span>
      <span className="flex gap-3">
        <span className="h-[21px] border-b border-dashed border-[#666a8d]">基差:</span>
        <span className="font-medium text-[#c43b3d]">
          −0.0<span className="mx-px text-[10px]">{"{4}"}</span>3 (−0.019%)
        </span>
      </span>
    </div>
    <div className="flex gap-4 pt-[6px] pl-3 text-xs">
      {["加预警", "加自选", "策略", "更多"].map((t) => (
        <button key={t} className="h-[26px] w-[57px] shrink-0 rounded bg-[#2b334e] pt-px text-[#b1b4d2]">
          {t}
        </button>
      ))}
    </div>

    <div className="mt-2 flex h-8 w-[320px] items-center border-t border-[#2b304e] pl-2 text-[#6a6e92]">
      <button aria-label="添加窗口" className="mr-[17px]">
        <AddPaneIcon size={13} />
      </button>
      <button aria-label="买卖盘" className="mr-[21px] flex h-[22px] w-[22px] items-center justify-center rounded bg-[#29314b]">
        <svg width="12" height="12" viewBox="0 0 12 12" fill="none" stroke="#7b7fa3" aria-hidden>
          <path d="M.5 0v5.500H11.500V11.500" />
          <path d="M2 2.500h10" stroke={DOWN} />
          <path d="M0 8.500h10" stroke={UP} />
        </svg>
      </button>
      <button aria-label="买盘" className="mr-[26px]">
        <svg width="12" height="12" viewBox="0 0 12 12" fill="none" stroke="#7b7fa3" aria-hidden>
          <path d="M.5 12V.500H12" />
          <path d="M3 3.500h9M3 6.500h9M3 9.500h9" stroke={UP} />
        </svg>
      </button>
      <button aria-label="卖盘" className="mr-[78px]">
        <svg width="12" height="12" viewBox="0 0 12 12" fill="none" stroke="#7b7fa3" aria-hidden>
          <path d="M.5 0v11.500H12" />
          <path d="M3 1.500h9M3 4.500h9M3 8.500h9" stroke={DOWN} />
        </svg>
      </button>
      <button className="text-xs font-medium text-[#c3c6e4]">5位小数</button>
    </div>
    <a href="#orders" className="flex items-center gap-[6px] pl-3 text-sm leading-5 font-medium text-[#c0c3e0]">
      查看主力挂单情况
      <svg width="6" height="10" viewBox="0 0 6 10" fill="none" stroke="currentColor" strokeWidth="1.200" aria-hidden>
        <path d="m.5.500 4.500 4.500L.5 9.500" />
      </svg>
    </a>
    <div className="flex w-[320px] items-center pt-1 pl-3 text-sm leading-6 text-[#5d6183]">
      <span className="w-10">委比:</span>
      <span className="w-[98px] text-xs font-medium text-[#22946f]">+0.09%</span>
      <span className="w-[39px]">委差:</span>
      <span className="text-xs font-medium text-[#22946f]">+3059900</span>
    </div>
    <div className="border-t border-[#2b304e] pt-[6px] pb-[5px]">
      <BookHeader amount="数量 (DOGE)" third="委托额" />
    </div>
    <div className="relative h-[129px] overflow-hidden">
      <div className="absolute top-0 right-0 h-2 w-[15px] bg-[#3a1f2e]" />
      <div className="-mt-[11px]">
        <BookTable label="卖单" rows={asks} color={() => "text-[#b8393b]"} />
      </div>
    </div>
    <div className="flex h-[52px] w-[320px] items-end bg-[#20253a] pb-[6px] pl-3">
      <div className="w-[223px]">
        <div className="text-xl leading-6 font-bold text-[#cf3e3e]">0.17711</div>
        <div className="text-xs leading-4 text-[#5d6183]">$0.17711</div>
      </div>
      <span className="pb-1 text-sm leading-5 font-bold text-[#cf3e3e]">−0.05%</span>
    </div>
    <div className="h-[129px] overflow-hidden">
      <BookTable label="买单" rows={bids} color={() => "text-[#22946f]"} />
    </div>

    <div className="flex h-9 w-[320px] items-center pl-3 text-sm">
      <button className="h-full border-b border-[#d3d5ea] pb-px font-medium text-[#c3c6e4]">最新成交</button>
      <button className="ml-4 pb-[2px] text-[#5d6183]">大额成交</button>
      <label className="ml-[54px] flex items-center gap-[6px] pb-[2px] text-xs text-[#666a8d]">
        <input type="checkbox" className="h-[14px] w-[14px] appearance-none rounded-xs border border-[#5d6183]" />
        极速
      </label>
    </div>
    <div className="pt-[2px] pb-[5px]">
      <BookHeader amount="数量(DOGE)" third="成交时间" />
    </div>
    <BookTable label="最新成交" rows={trades} color={(i) => (i === 0 ? "text-[#22946f]" : "text-[#b8393b]")} />
  </aside>
);

/* ---------- Page ---------- */

const Watermark: FC = () => (
  <div className="pointer-events-none absolute right-[9px] bottom-2 flex items-center text-2xl leading-9 font-medium text-white">
    <svg width="28" height="28" viewBox="0 0 28 28" fill="#dcdce0" aria-hidden>
      <path d="M14 0 5.500 8.500 8.600 11.600 14 6.200l5.400 5.400 3.100-3.100zM14 28l-8.500-8.500 3.100-3.100 5.400 5.400 5.400-5.400 3.100 3.100zM3.100 10.900 6.200 14l-3.100 3.100L0 14zM24.900 10.900 28 14l-3.100 3.100-3.100-3.100zM14 10.900l3.100 3.100-3.100 3.100-3.100-3.100z" />
    </svg>
    <span className="mx-[5px] text-xl font-normal text-[#dcdce0]">@</span>
    <span>璇玑趋势</span>
  </div>
);

const App: FC = () => (
  <div className="relative flex h-screen flex-col overflow-hidden bg-[#0c0f1a] font-[Roboto,'Noto_Sans_CJK_SC',sans-serif]">
    <div className="flex h-[6px] shrink-0 justify-end pr-[214px]">
      <div className="h-[2px] w-[200px] border border-t-0 border-[#2b304e]" />
    </div>
    <div className="flex min-h-0 flex-1">
      <main className="relative mr-1 flex min-w-0 flex-1 flex-col bg-[#181b2c]">
        <TabBar />
        <PeriodBar />
        <DrawBar />
        <Chart />
        <button aria-label="收起侧栏" className="absolute top-[449px] -right-1 flex h-[38px] w-2 items-center justify-center rounded-l-[3px] bg-[#3b4068] text-[#8b8fb3]">
          <svg width="4" height="8" viewBox="0 0 4 8" fill="currentColor" aria-hidden>
            <path d="M0 0v8l4-4z" />
          </svg>
        </button>
      </main>
      <SidePanel />
    </div>
    <Watermark />
  </div>
);

export default App;
